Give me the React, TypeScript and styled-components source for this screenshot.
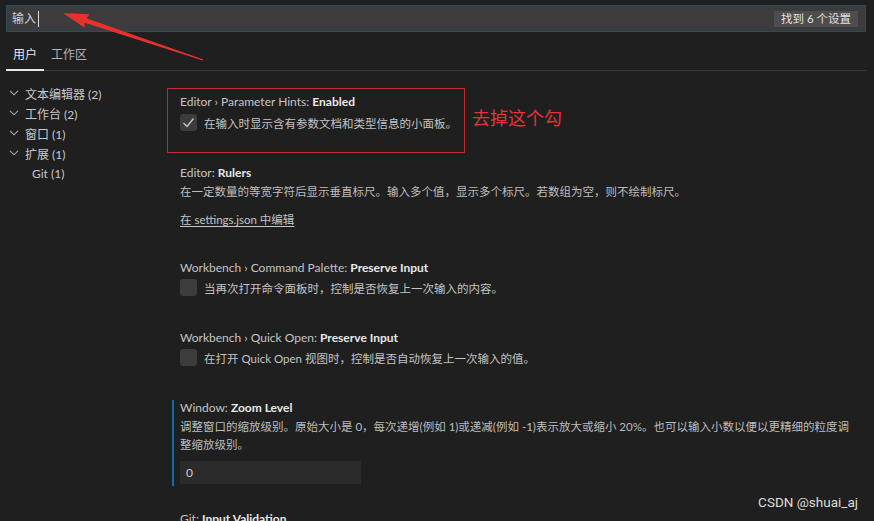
import React from "react";
import styled, { createGlobalStyle } from "styled-components";

const Global = createGlobalStyle`
  html, body { margin: 0; padding: 0; background: #1f1f1f; }
  #root { width: 874px; height: 521px; }
`;

const FONT = `Lato, "Noto Sans CJK SC", sans-serif`;

const Page = styled.div`
  position: relative;
  width: 874px;
  height: 521px;
  overflow: hidden;
  background: #1f1f1f;
  color: #c8c8c8;
  font-family: ${FONT};
  font-size: 12px;
  display: flex;
  flex-direction: column;
`;

const SearchBox = styled.div`
  margin: 5px 8px 0 6px;
  height: 27px;
  box-sizing: border-box;
  border: 1px solid #2c4a60;
  background: #3c3c3c;
  display: flex;
  align-items: center;
  padding: 0 7px 0 5px;
`;

const Query = styled.span`
  color: #d0d0d0;
  font-size: 12px;
  line-height: 16px;
`;

const Caret = styled.span`
  width: 1px;
  height: 16px;
  margin-left: 2px;
  background: #e0e0e0;
`;

const Badge = styled.span`
  margin-left: auto;
  background: #4d4d4d;
  color: #e2e2e2;
  font-size: 11.5px;
  line-height: 16px;
  padding: 0 7px;
`;

const TabBar = styled.div`
  margin: 0 8px 0 6px;
  padding-top: 14px;
  display: flex;
  border-bottom: 1px solid #3b3b3b;
`;

const Tab = styled.div<{ $active?: boolean }>`
  padding: 0 7px 5px;
  line-height: 18px;
  font-size: 12px;
  color: ${(p) => (p.$active ? "#e8e8e8" : "#b4b4b4")};
  border-bottom: 2px solid ${(p) => (p.$active ? "#e8e8e8" : "transparent")};
  margin-bottom: -1px;
`;

const Body = styled.div`
  flex: 1;
  display: flex;
  min-height: 0;
`;

const Sidebar = styled.div`
  width: 172px;
  flex: none;
  padding-top: 12px;
  display: flex;
  flex-direction: column;
`;

const TreeRow = styled.div<{ $indent?: boolean }>`
  height: 20px;
  display: flex;
  align-items: center;
  gap: 6px;
  padding-left: ${(p) => (p.$indent ? "32px" : "9px")};
  color: #c8c8c8;
  font-size: 12px;
`;

const Content = styled.div`
  flex: 1;
  padding: 23px 8px 0 0;
  display: flex;
  flex-direction: column;
  min-width: 0;
`;

const Item = styled.div<{ $focused?: boolean; $after: number }>`
  border-left: 2px solid ${(p) => (p.$focused ? "#0f6fa3" : "transparent")};
  padding: 0 0 2px 6px;
  margin-bottom: ${(p) => p.$after}px;
`;

const Title = styled.div`
  line-height: 16px;
  font-size: 12px;
  color: #c4c4c4;
  white-space: nowrap;
  b {
    color: #e8e8e8;
    font-weight: 700;
  }
`;

const Desc = styled.div`
  margin-top: 2px;
  max-width: 676px;
  line-height: 18px;
  font-size: 11.5px;
  color: #bdbdbd;
`;

const EditLink = styled.a`
  display: inline-block;
  margin-top: 11px;
  line-height: 16px;
  font-size: 11.5px;
  color: #c4c4c4;
  text-decoration: underline;
  text-underline-offset: 2px;
`;

const CheckRow = styled.div<{ $top: number }>`
  margin-top: ${(p) => p.$top}px;
  height: 17px;
  display: flex;
  align-items: center;
  gap: 7px;
  font-size: 11.5px;
  color: #c4c4c4;
`;

const Box = styled.span`
  width: 17px;
  height: 17px;
  box-sizing: border-box;
  border-radius: 3px;
  background: #3c3c3c;
  display: flex;
  align-items: center;
  justify-content: center;
  flex: none;
`;

const NumberInput = styled.div`
  margin-top: 7px;
  width: 181px;
  height: 23px;
  line-height: 23px;
  padding-left: 6px;
  box-sizing: border-box;
  background: #2b2b2b;
  color: #cccccc;
  font-size: 12px;
`;

const Annotation = styled.div`
  position: absolute;
  left: 167px;
  top: 88px;
  width: 298px;
  height: 65px;
  box-sizing: border-box;
  border: 1.5px solid #c22a2e;
  pointer-events: none;
`;

const Note = styled.div`
  position: absolute;
  left: 472px;
  top: 106px;
  font-size: 18px;
  line-height: 22px;
  color: #e03438;
  font-family: "Noto Sans CJK SC", sans-serif;
`;

const ArrowSvg = styled.svg`
  position: absolute;
  left: 60px;
  top: 8px;
  pointer-events: none;
`;

const Watermark = styled.div`
  position: absolute;
  right: 16px;
  bottom: 11px;
  font-family: Roboto, sans-serif;
  font-size: 13.5px;
  line-height: 16px;
  color: #dcdcdc;
`;

const Chevron = () => (
  <svg width="10" height="6" viewBox="0 0 10 6">
    <polyline points="1,0.8 5,4.8 9,0.8" fill="none" stroke="#a8a8a8" strokeWidth="1.1" />
  </svg>
);

const Check = () => (
  <svg width="17" height="17" viewBox="0 0 17 17">
    <polyline points="3.5,9 7,12.5 13.5,4.5" fill="none" stroke="#c8c8c8" strokeWidth="1.3" />
  </svg>
);

const tree: { label: string; indent?: boolean }[] = [
  { label: "文本编辑器 (2)" },
  { label: "工作台 (2)" },
  { label: "窗口 (1)" },
  { label: "扩展 (1)" },
  { label: "Git (1)", indent: true },
];

export default function App() {
  return (
    <Page>
      <Global />
      <SearchBox>
        <Query>输入</Query>
        <Caret />
        <Badge>找到 6 个设置</Badge>
      </SearchBox>
      <TabBar>
        <Tab $active>用户</Tab>
        <Tab>工作区</Tab>
      </TabBar>
      <Body>
        <Sidebar>
          {tree.map((t) => (
            <TreeRow key={t.label} $indent={t.indent}>
              {!t.indent && <Chevron />}
              <span>{t.label}</span>
            </TreeRow>
          ))}
        </Sidebar>
        <Content>
          <Item $after={32}>
            <Title>
              Editor › Parameter Hints: <b>Enabled</b>
            </Title>
            <CheckRow $top={4}>
              <Box>
                <Check />
              </Box>
              <span>在输入时显示含有参数文档和类型信息的小面板。</span>
            </CheckRow>
          </Item>
          <Item $after={30}>
            <Title>
              Editor: <b>Rulers</b>
            </Title>
            <Desc>在一定数量的等宽字符后显示垂直标尺。输入多个值，显示多个标尺。若数组为空，则不绘制标尺。</Desc>
            <EditLink>在 settings.json 中编辑</EditLink>
          </Item>
          <Item $after={32}>
            <Title>
              Workbench › Command Palette: <b>Preserve Input</b>
            </Title>
            <CheckRow $top={3}>
              <Box />
              <span>当再次打开命令面板时，控制是否恢复上一次输入的内容。</span>
            </CheckRow>
          </Item>
          <Item $after={32}>
            <Title>
              Workbench › Quick Open: <b>Preserve Input</b>
            </Title>
            <CheckRow $top={3}>
              <Box />
              <span>在打开 Quick Open 视图时，控制是否自动恢复上一次输入的值。</span>
            </CheckRow>
          </Item>
          <Item $focused $after={25}>
            <Title>
              Window: <b>Zoom Level</b>
            </Title>
            <Desc>
              调整窗口的缩放级别。原始大小是 0，每次递增(例如 1)或递减(例如 -1)表示放大或缩小 20%。也可以输入小数以便以更精细的粒度调整缩放级别。
            </Desc>
            <NumberInput>0</NumberInput>
          </Item>
          <Item $after={0}>
            <Title>
              Git: <b>Input Validation</b>
            </Title>
          </Item>
        </Content>
      </Body>
      <Annotation />
      <Note>去掉这个勾</Note>
      <ArrowSvg width="150" height="58" viewBox="0 0 150 58">
        <polygon
          points="3,5 29.5,6.2 26.4,10.2 143.3,51.4 142.8,52.6 24.6,14.8 24.6,19.8"
          fill="#e8312f"
        />
      </ArrowSvg>
      <Watermark>CSDN @shuai_aj</Watermark>
    </Page>
  );
}
